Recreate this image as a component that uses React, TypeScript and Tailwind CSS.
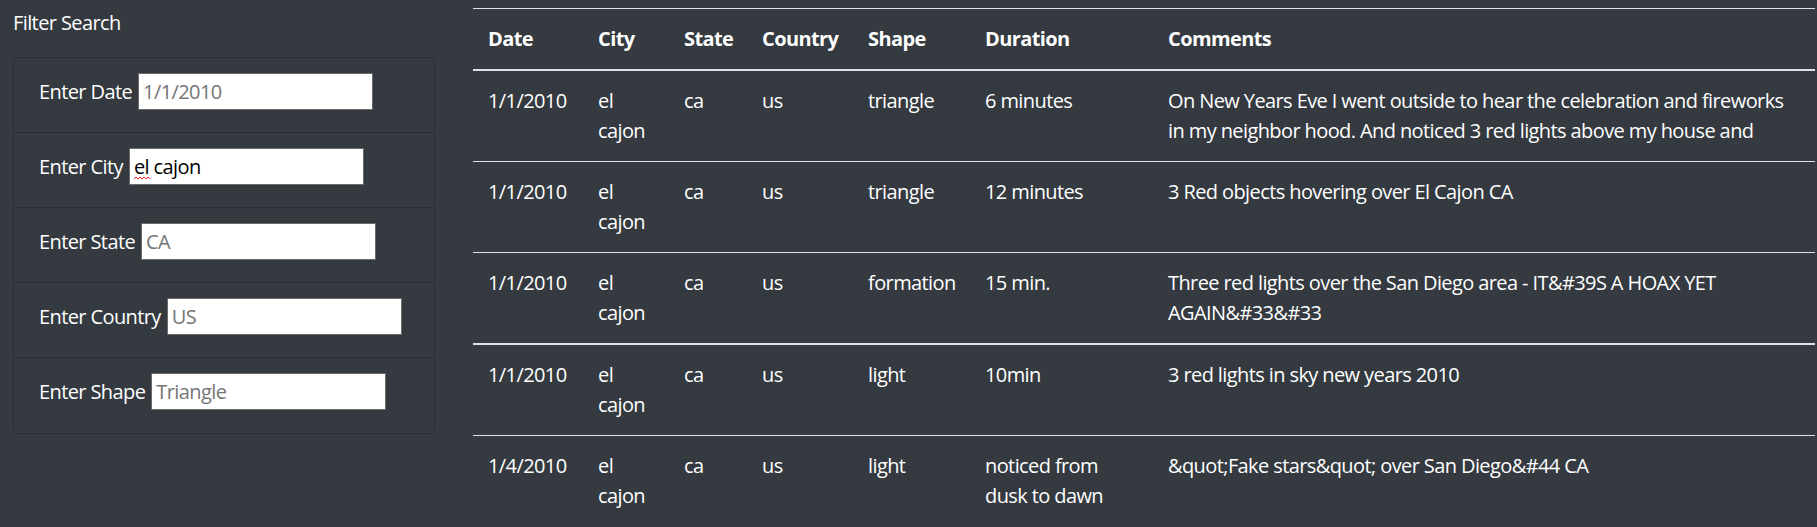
const filters = [
  { label: "Enter Date", id: "datetime", placeholder: "1/1/2010", value: "" },
  { label: "Enter City", id: "city", placeholder: "", value: "el cajon" },
  { label: "Enter State", id: "state", placeholder: "CA", value: "" },
  { label: "Enter Country", id: "country", placeholder: "US", value: "" },
  { label: "Enter Shape", id: "shape", placeholder: "Triangle", value: "" },
];

const rows = [
  {
    date: "1/1/2010",
    city: "el cajon",
    state: "ca",
    country: "us",
    shape: "triangle",
    duration: "6 minutes",
    comments:
      "On New Years Eve I went outside to hear the celebration and fireworks in my neighbor hood. And noticed 3 red lights above my house and",
  },
  {
    date: "1/1/2010",
    city: "el cajon",
    state: "ca",
    country: "us",
    shape: "triangle",
    duration: "12 minutes",
    comments: "3 Red objects hovering over El Cajon CA",
  },
  {
    date: "1/1/2010",
    city: "el cajon",
    state: "ca",
    country: "us",
    shape: "formation",
    duration: "15 min.",
    comments: "Three red lights over the San Diego area - IT&#39S A HOAX YET AGAIN&#33&#33",
  },
  {
    date: "1/1/2010",
    city: "el cajon",
    state: "ca",
    country: "us",
    shape: "light",
    duration: "10min",
    comments: "3 red lights in sky new years 2010",
  },
  {
    date: "1/4/2010",
    city: "el cajon",
    state: "ca",
    country: "us",
    shape: "light",
    duration: "noticed from dusk to dawn",
    comments: "&quot;Fake stars&quot; over San Diego&#44 CA",
  },
];

const headers = ["Date", "City", "State", "Country", "Shape", "Duration", "Comments"];
const colWidths = ["w-[110px]", "w-[86px]", "w-[78px]", "w-[106px]", "w-[117px]", "w-[183px]", ""];

// red spell-check squiggle drawn under "el"
function Squiggle() {
  return (
    <svg
      className="pointer-events-none absolute left-[5px] top-[28px]"
      width="16"
      height="4"
      viewBox="0 0 16 4"
    >
      <path d="M0 3 L2 1 L4 3 L6 1 L8 3 L10 1 L12 3 L14 1 L16 3" fill="none" stroke="#e11d1d" strokeWidth="1" />
    </svg>
  );
}

function FilterPanel() {
  return (
    <aside className="w-[422px] shrink-0 ml-[13px]">
      <h5 className="pt-[8px] text-[20px] leading-[30px] text-white">Filter Search</h5>
      <ul className="mt-[19px] rounded-[5px] border border-black/20">
        {filters.map((f, i) => (
          <li
            key={f.id}
            className={`flex h-[75px] items-baseline px-[25px] pt-[15px] ${
              i < filters.length - 1 ? "border-b border-black/20" : ""
            }`}
          >
            <label htmlFor={f.id} className="whitespace-nowrap text-[20px] leading-[30px] text-white">
              {f.label}
            </label>
            <div className="relative ml-[6px] flex shrink-0">
              <input
                id={f.id}
                type="text"
                spellCheck={false}
                placeholder={f.placeholder}
                defaultValue={f.value}
                className="h-[37px] w-[235px] border border-[#6b6b6b] bg-white px-[4px] text-[20px] text-black placeholder:text-[#757575] outline-none"
              />
              {f.id === "city" && <Squiggle />}
            </div>
          </li>
        ))}
      </ul>
    </aside>
  );
}

function SightingsTable() {
  return (
    <div className="ml-[38px] mr-[2px] mt-[8px] flex-1">
      <table className="w-full table-fixed border-collapse text-left text-[20px] leading-[30px] text-white">
        <thead>
          <tr className="border-t border-b-2 border-[#dee2e6]">
            {headers.map((h, i) => (
              <th key={h} className={`${colWidths[i]} p-[15px] align-bottom font-bold`}>
                {h}
              </th>
            ))}
          </tr>
        </thead>
        <tbody>
          {rows.map((r, i) => (
            <tr
              key={i}
              className={`${i === 3 ? "border-t-2" : i === 0 ? "" : "border-t"} border-[#dee2e6]`}
            >
              <td className="p-[15px] align-top">{r.date}</td>
              <td className="p-[15px] align-top">{r.city}</td>
              <td className="p-[15px] align-top">{r.state}</td>
              <td className="p-[15px] align-top">{r.country}</td>
              <td className="p-[15px] align-top">{r.shape}</td>
              <td className="p-[15px] align-top">{r.duration}</td>
              <td className="p-[15px] align-top">{r.comments}</td>
            </tr>
          ))}
        </tbody>
      </table>
    </div>
  );
}

export default function App() {
  return (
    <div
      className="flex h-[527px] overflow-hidden bg-[#343a40] tracking-[-0.6px]"
      style={{ fontFamily: '"Open Sans", "Noto Sans", sans-serif' }}
    >
      <FilterPanel />
      <SightingsTable />
    </div>
  );
}
